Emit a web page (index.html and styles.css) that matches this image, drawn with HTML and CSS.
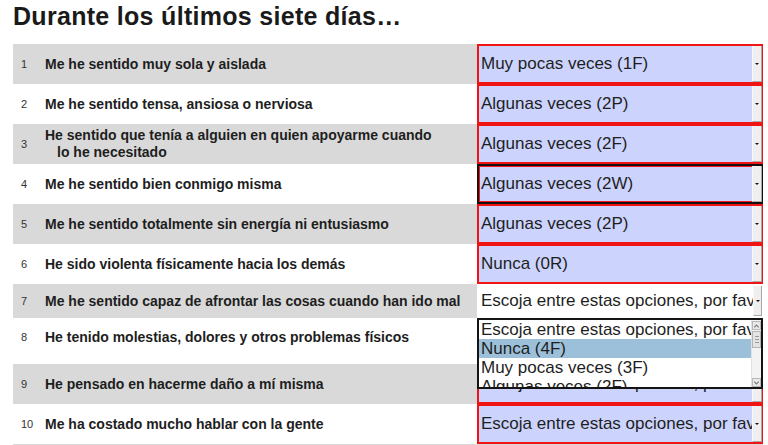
FILE: index.html
```html
<!DOCTYPE html>
<html lang="es">
<head>
<meta charset="utf-8">
<title>Durante los últimos siete días</title>
<link rel="stylesheet" href="styles.css">
</head>
<body>
<main class="page">
  <h1 class="title">Durante los últimos siete días…</h1>
  <div class="list">
    <div class="row shade">
      <span class="num">1</span>
      <span class="q">Me he sentido muy sola y aislada</span>
      <div class="sel err"><span class="val">Muy pocas veces (1F)</span><span class="btn"><i></i></span></div>
    </div>
    <div class="row">
      <span class="num">2</span>
      <span class="q">Me he sentido tensa, ansiosa o nerviosa</span>
      <div class="sel err"><span class="val">Algunas veces (2P)</span><span class="btn"><i></i></span></div>
    </div>
    <div class="row shade">
      <span class="num">3</span>
      <span class="q hang">He sentido que tenía a alguien en quien apoyarme cuando<br>lo he necesitado</span>
      <div class="sel err"><span class="val">Algunas veces (2F)</span><span class="btn"><i></i></span></div>
    </div>
    <div class="row">
      <span class="num">4</span>
      <span class="q">Me he sentido bien conmigo misma</span>
      <div class="sel focus"><span class="val">Algunas veces (2W)</span><span class="btn"><i></i></span></div>
    </div>
    <div class="row shade">
      <span class="num">5</span>
      <span class="q">Me he sentido totalmente sin energía ni entusiasmo</span>
      <div class="sel err"><span class="val">Algunas veces (2P)</span><span class="btn"><i></i></span></div>
    </div>
    <div class="row">
      <span class="num">6</span>
      <span class="q">He sido violenta físicamente hacia los demás</span>
      <div class="sel err"><span class="val">Nunca (0R)</span><span class="btn"><i></i></span></div>
    </div>
    <div class="row shade short">
      <span class="num">7</span>
      <span class="q">Me he sentido capaz de afrontar las cosas cuando han ido mal</span>
      <div class="sel plain open">
        <span class="val">Escoja entre estas opciones, por favor</span><span class="btn narrow"><i></i></span>
        <div class="popup">
          <div class="opts">
            <div class="opt">Escoja entre estas opciones, por favor</div>
            <div class="opt on">Nunca (4F)</div>
            <div class="opt">Muy pocas veces (3F)</div>
            <div class="opt">Algunas veces (2F)</div>
            <div class="opt">Muchas veces (1F)</div>
          </div>
          <div class="sb">
            <span class="sb-btn"><svg viewBox="0 0 8 6" width="8" height="6"><path d="M1.5 4.5 L4 2 L6.5 4.5" fill="none" stroke="#7a7a7a" stroke-width="1.3"/></svg></span>
            <span class="sb-track"><span class="sb-thumb"><b></b><b></b><b></b></span></span>
            <span class="sb-btn"><svg viewBox="0 0 8 6" width="8" height="6"><path d="M1.5 1.5 L4 4 L6.5 1.5" fill="none" stroke="#7a7a7a" stroke-width="1.3"/></svg></span>
          </div>
        </div>
      </div>
    </div>
    <div class="row tall">
      <span class="num">8</span>
      <span class="q">He tenido molestias, dolores y otros problemas físicos</span>
      <div class="sel err"><span class="val">Escoja entre estas opciones, por favor</span><span class="btn"><i></i></span></div>
    </div>
    <div class="row shade">
      <span class="num">9</span>
      <span class="q">He pensado en hacerme daño a mí misma</span>
      <div class="sel err"><span class="val">Escoja entre estas opciones, por favor</span><span class="btn"><i></i></span></div>
    </div>
    <div class="row">
      <span class="num">10</span>
      <span class="q">Me ha costado mucho hablar con la gente</span>
      <div class="sel err"><span class="val">Escoja entre estas opciones, por favor</span><span class="btn"><i></i></span></div>
    </div>
    <div class="row shade end"></div>
  </div>
</main>
</body>
</html>
```
FILE: styles.css
```css
* { box-sizing: border-box; }
html, body { margin: 0; padding: 0; background: #fff; }
body {
  font-family: "Liberation Sans", Arial, Helvetica, sans-serif;
  color: #1e1e1e;
  overflow: hidden;
}
.page {
  padding-left: 13px;
  width: 768px;
}
.title {
  margin: 0 0 13px 0;
  padding-top: 1px;
  font-size: 25px;
  line-height: 30px;
  font-weight: bold;
  letter-spacing: 0.3px;
  color: #1a1a1a;
}
.list {
  width: 750px;
  display: flex;
  flex-direction: column;
}
.row {
  display: grid;
  grid-template-columns: 32px 432px 286px;
  height: 40px;
  align-items: center;
  background: #fff;
}
.row.shade { background: #d9d9d9; }
.row.short { height: 34px; }
.row.tall { height: 46px; }
.row.end { height: 10px; }
.row.tall .num, .row.tall .q { padding-bottom: 8px; }
.num {
  padding-left: 8px;
  font-size: 11px;
  color: #333;
}
.q {
  font-size: 14px;
  font-weight: bold;
  line-height: 17px;
  color: #1e1e1e;
  white-space: nowrap;
}
.q.hang {
  padding-left: 12px;
  text-indent: -12px;
}
.sel {
  align-self: stretch;
  display: flex;
  align-items: stretch;
  border: 2px solid transparent;
  background: #ccd4fd;
  font-size: 17px;
  color: #1e1e1e;
}
.sel.err { border-color: #f01414; }
.sel.focus {
  border-color: #111;
  box-shadow: inset 0 0 0 1px #f01414;
}
.sel.plain { background: #fff; }
.sel.open { position: relative; }
.val {
  flex: 1;
  min-width: 0;
  overflow: hidden;
  white-space: nowrap;
  padding-left: 2px;
  display: flex;
  align-items: center;
}
.btn {
  width: 10px;
  flex: none;
  background: #efefef;
  border-left: 1px solid #f8f8f8;
  border-right: 1px solid #a8a8a8;
  border-bottom: 1px solid #a8a8a8;
  display: flex;
  align-items: center;
  justify-content: center;
  margin: 0 -1px 0 0;
}
.btn.narrow { width: 9px; }
.btn i {
  display: block;
  width: 0;
  height: 0;
  border-left: 2px solid transparent;
  border-right: 2px solid transparent;
  border-top: 2px solid #111;
}
.popup {
  position: absolute;
  left: -2px;
  top: calc(100% + 2px);
  width: 286px;
  height: 71px;
  border: 2px solid #141414;
  background: #fff;
  display: flex;
  overflow: hidden;
  z-index: 5;
}
.opts {
  flex: 1;
  min-width: 0;
  overflow: hidden;
}
.opt {
  height: 19px;
  line-height: 19px;
  padding-left: 2px;
  white-space: nowrap;
  overflow: hidden;
  font-size: 17px;
  color: #1e1e1e;
}
.opt.on { background: #9cc0da; }
.sb {
  width: 10px;
  flex: none;
  display: flex;
  flex-direction: column;
  background: #f3f3f3;
  border-left: 1px solid #e2e2e2;
}
.sb-btn {
  height: 9px;
  flex: none;
  display: flex;
  align-items: center;
  justify-content: center;
  background: #e9e9e9;
  border: 1px solid #b9b9b9;
  margin-top: 1px;
}
.sb-track {
  flex: 1;
  padding-top: 1px;
}
.sb-thumb {
  display: flex;
  flex-direction: column;
  justify-content: center;
  align-items: center;
  gap: 2px;
  height: 17px;
  background: #e4e4e4;
  border: 1px solid #b4b4b4;
}
.sb-thumb b {
  display: block;
  width: 4px;
  height: 1px;
  background: #9a9a9a;
}
```
